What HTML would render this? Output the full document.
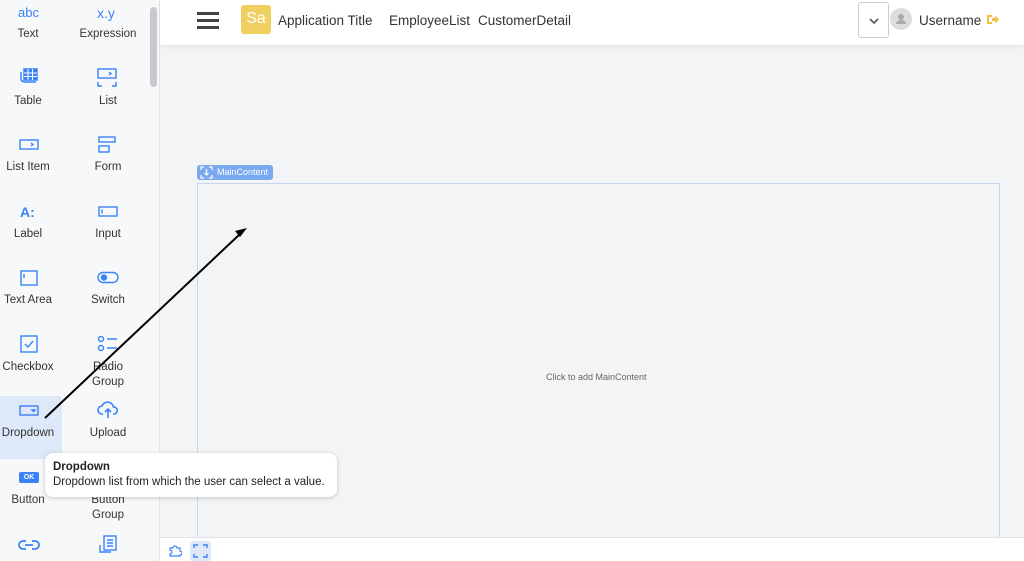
<!DOCTYPE html>
<html><head><meta charset="utf-8"><style>
*{box-sizing:border-box;margin:0;padding:0}
body{width:1024px;height:561px;overflow:hidden;font-family:"Liberation Sans",sans-serif;background:#f3f4f6;position:relative;color:#333}
.side{position:absolute;left:0;top:0;width:160px;height:561px;background:#f7f8fa;border-right:1px solid #e3e5e8}
.it{position:absolute;width:62px;text-align:center;font-size:11.5px;color:#333;line-height:15px}
.ic{position:absolute;color:#3b82f6}
.hdr{position:absolute;left:160px;top:0;right:0;height:45px;background:#fff;box-shadow:0 2px 4px rgba(0,0,0,.06)}
.t{position:absolute;font-size:13.5px;color:#333;top:13px}
</style></head><body>
<div class="side">
<div style="position:absolute;left:150px;top:7px;width:7px;height:80px;border-radius:4px;background:#c8c9cc"></div>
<div style="position:absolute;left:0;top:396px;width:62px;height:63px;background:#dde8f8;border-radius:0 4px 4px 0"></div>
<div class="ic" style="left:18px;top:5px;font-size:13px">abc</div>
<div class="ic" style="left:97px;top:5px;font-size:14px">x.y</div>
<div class="it" style="left:-3px;top:27px">Text</div><div class="it" style="left:77px;top:27px">Expression</div>
<svg class="ic" style="left:18px;top:67px" width="22" height="20" viewBox="0 0 22 20" fill="none" stroke="#3b82f6" stroke-width="1.5"><rect x="6" y="2" width="13" height="11" fill="#3b82f6"/><path d="M6 6h13M6 9.5h13M10 2v11M14.5 2v11" stroke="#fff" stroke-width="1"/><path d="M3 5v7q0 3 6 3h9"/></svg>
<svg class="ic" style="left:97px;top:68px" width="20" height="20" viewBox="0 0 20 20" fill="none" stroke="#3b82f6" stroke-width="1.4"><rect x="1" y="1" width="18" height="9"/><path d="M12 4l2 1.5-2 1.5M1 14v4h4M19 14v4h-4"/></svg>
<div class="it" style="left:-3px;top:94px">Table</div><div class="it" style="left:77px;top:94px">List</div>
<svg class="ic" style="left:19px;top:139px" width="20" height="12" viewBox="0 0 20 12" fill="none" stroke="#3b82f6" stroke-width="1.4"><rect x="1" y="1" width="18" height="9"/><path d="M12 4l2 1.5-2 1.5"/></svg>
<svg class="ic" style="left:98px;top:136px" width="18" height="18" viewBox="0 0 18 18" fill="none" stroke="#3b82f6" stroke-width="1.4"><rect x="1" y="1" width="16" height="5"/><rect x="1" y="10" width="10" height="6"/></svg>
<div class="it" style="left:-3px;top:160px">List Item</div><div class="it" style="left:77px;top:160px">Form</div>
<div class="ic" style="left:20px;top:204px;font-size:14px;font-weight:bold">A:</div>
<svg class="ic" style="left:98px;top:206px" width="20" height="12" viewBox="0 0 20 12" fill="none" stroke="#3b82f6" stroke-width="1.4"><rect x="1" y="1" width="18" height="9"/><path d="M4 3.5v4"/></svg>
<div class="it" style="left:-3px;top:227px">Label</div><div class="it" style="left:77px;top:227px">Input</div>
<svg class="ic" style="left:20px;top:270px" width="18" height="16" viewBox="0 0 18 16" fill="none" stroke="#3b82f6" stroke-width="1.4"><rect x="1" y="1" width="16" height="14"/><path d="M4 4v4"/></svg>
<svg class="ic" style="left:97px;top:271px" width="22" height="14" viewBox="0 0 22 14" fill="none" stroke="#3b82f6" stroke-width="1.4"><rect x="1" y="1.5" width="20" height="10" rx="5"/><circle cx="7" cy="6.5" r="2.5" fill="#3b82f6"/></svg>
<div class="it" style="left:-3px;top:293px">Text Area</div><div class="it" style="left:77px;top:293px">Switch</div>
<svg class="ic" style="left:20px;top:335px" width="18" height="18" viewBox="0 0 18 18" fill="none" stroke="#3b82f6" stroke-width="1.4"><rect x="1" y="1" width="16" height="16"/><path d="M5 9l3 3 5-6"/></svg>
<svg class="ic" style="left:97px;top:335px" width="22" height="18" viewBox="0 0 22 18" fill="none" stroke="#3b82f6" stroke-width="1.4"><circle cx="4" cy="4" r="2.5"/><circle cx="4" cy="13" r="2.5"/><path d="M10 4h10M10 13h10"/></svg>
<div class="it" style="left:-3px;top:360px">Checkbox</div><div class="it" style="left:77px;top:360px;line-height:15px">Radio<br>Group</div>
<svg class="ic" style="left:19px;top:405px" width="20" height="12" viewBox="0 0 20 12" fill="none" stroke="#3b82f6" stroke-width="1.4"><rect x="1" y="1" width="18" height="9"/><path d="M13 5h3l-1.5 1.5z" fill="#3b82f6"/></svg>
<svg class="ic" style="left:97px;top:401px" width="22" height="18" viewBox="0 0 22 18" fill="none" stroke="#3b82f6" stroke-width="1.6"><path d="M6 13H5a4 4 0 0 1 0-8 6 6 0 0 1 11.5 1A3.5 3.5 0 0 1 17 13h-1M11 17V8M8 11l3-3 3 3"/></svg>
<div class="it" style="left:-3px;top:426px">Dropdown</div><div class="it" style="left:77px;top:426px">Upload</div>
<div style="position:absolute;left:19px;top:472px;width:20px;height:11px;background:#3b82f6;border-radius:2px;color:#fff;font-size:7px;font-weight:bold;text-align:center;line-height:11px">OK</div>
<div class="it" style="left:-3px;top:493px">Button</div><div class="it" style="left:77px;top:493px">Button<br>Group</div>
<svg class="ic" style="left:18px;top:538px" width="22" height="14" viewBox="0 0 22 14" fill="none" stroke="#3b82f6" stroke-width="1.8"><path d="M8 3H5a4 4 0 0 0 0 8h3M14 3h3a4 4 0 0 1 0 8h-3M7 7h8"/></svg>
<svg class="ic" style="left:98px;top:535px" width="20" height="20" viewBox="0 0 20 20" fill="none" stroke="#3b82f6" stroke-width="1.4"><rect x="6" y="1" width="12" height="14"/><path d="M9 5h6M9 8h6M9 11h6M2 10v7h11"/></svg>
</div>
<div class="hdr">
<div style="position:absolute;left:37px;top:12px;width:22px;height:3px;background:#444;box-shadow:0 7px 0 #444,0 14px 0 #444"></div>
<div style="position:absolute;left:81px;top:5px;width:30px;height:29px;background:#f0d060;border-radius:3px;color:#fff;font-size:16px;text-align:center;line-height:28px">Sa</div>
<div class="t" style="left:118px">Application Title</div>
<div class="t" style="left:229px">EmployeeList</div>
<div class="t" style="left:318px">CustomerDetail</div>
<div style="position:absolute;left:698px;top:2px;width:31px;height:36px;border:1px solid #ccc;border-radius:3px"><svg width="31" height="34" viewBox="0 0 31 34"><path d="M11 16l4 4 4-4" fill="none" stroke="#555" stroke-width="1.6"/></svg></div>
<div style="position:absolute;left:730px;top:8px;width:22px;height:22px;border-radius:50%;background:#ddd"><svg width="22" height="22"><circle cx="11" cy="9" r="3" fill="#aaa"/><path d="M6 16a5 4 0 0 1 10 0z" fill="#aaa"/></svg></div>
<div class="t" style="left:759px">Username</div>
<svg style="position:absolute;left:826px;top:14px" width="13" height="11" viewBox="0 0 13 11"><path d="M1 1h5v2H3v5h3v2H1z M6 4h3V1.5l4 4-4 4V7H6z" fill="#f0c040"/></svg>
</div>
<div style="position:absolute;left:197px;top:165px;width:76px;height:15px;background:#79a9ef;border-radius:3px;color:#fff;font-size:9px;line-height:15px;padding-left:20px">MainContent</div>
<svg style="position:absolute;left:200px;top:166px" width="13" height="13" viewBox="0 0 13 13" fill="none" stroke="#fff" stroke-width="1.2"><path d="M1 4V1h3M9 1h3v3M12 9v3H9M4 12H1V9M6.5 3v6M4.5 7l2 2 2-2"/></svg>
<div style="position:absolute;left:197px;top:183px;width:803px;height:360px;border:1px solid #c5d7f0;background:#f3f4f6"></div>
<div style="position:absolute;left:546px;top:372px;font-size:9px;color:#666">Click to add MainContent</div>
<div style="position:absolute;left:160px;top:537px;right:0;height:24px;background:#fff;border-top:1px solid #e3e5e8"></div>
<svg style="position:absolute;left:168px;top:544px" width="14" height="14" viewBox="0 0 14 14" fill="none" stroke="#3b82f6" stroke-width="1.2"><path d="M2 4h3a2 2 0 0 1 4 0h3v3a2 2 0 0 1 0 4v1H2v-2a2 2 0 0 0 0-4z"/></svg>
<div style="position:absolute;left:190px;top:541px;width:21px;height:20px;background:#dde8f8;border-radius:3px"></div>
<svg style="position:absolute;left:193px;top:544px" width="15" height="14" viewBox="0 0 15 14" fill="none" stroke="#3b82f6" stroke-width="1.4"><path d="M1 4V1h4M10 1h4v3M14 10v3h-4M5 13H1v-3"/></svg>
<svg style="position:absolute;left:0;top:0" width="1024" height="561"><path d="M45 418L240 234" stroke="#000" stroke-width="2"/><path d="M247 228l-12 3 5 6z" fill="#000"/></svg>
<div style="position:absolute;left:45px;top:453px;width:292px;height:44px;background:#fff;border-radius:8px;box-shadow:0 1px 5px rgba(0,0,0,.2);padding:7px 8px;font-size:11.5px;line-height:15px;color:#222;white-space:nowrap"><b>Dropdown</b><br>Dropdown list from which the user can select a value.</div>
</body></html>
